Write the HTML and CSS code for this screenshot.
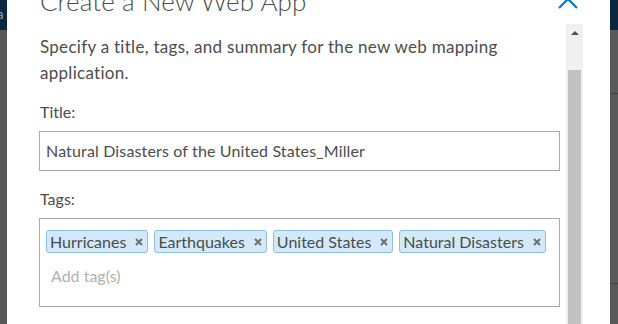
FILE: index.html
```html
<!DOCTYPE html>
<html lang="en">
<head>
    <meta charset="UTF-8">
    <title>Create a New Web App</title>
    <link rel="stylesheet" href="styles.css">
</head>
<body>
    <div class="page">
        <div class="side side-left"><div class="side-top"><span>a</span></div></div>

        <div class="dialog">
            <div class="dialog-header">
                <h1>Create a New Web App</h1>
                <svg class="close" width="22" height="22" viewBox="0 0 22 22">
                    <path d="M2 2 L20 20 M20 2 L2 20" stroke="#0079c1" stroke-width="2.2" fill="none"/>
                </svg>
            </div>

            <div class="dialog-body">
                <div class="form">
                    <p class="intro">Specify a title, tags, and summary for the new web mapping application.</p>

                    <label class="field-label">Title:</label>
                    <div class="text-input">Natural Disasters of the United States_Miller</div>

                    <label class="field-label">Tags:</label>
                    <div class="tag-box">
                        <div class="tag-row">
                            <span class="tag">Hurricanes<svg class="remove" viewBox="0 0 8 8"><path d="M1 1 L7 7 M7 1 L1 7"/></svg></span>
                            <span class="tag">Earthquakes<svg class="remove" viewBox="0 0 8 8"><path d="M1 1 L7 7 M7 1 L1 7"/></svg></span>
                            <span class="tag">United States<svg class="remove" viewBox="0 0 8 8"><path d="M1 1 L7 7 M7 1 L1 7"/></svg></span>
                            <span class="tag">Natural Disasters<svg class="remove" viewBox="0 0 8 8"><path d="M1 1 L7 7 M7 1 L1 7"/></svg></span>
                        </div>
                        <div class="placeholder">Add tag(s)</div>
                    </div>
                </div>

                <!-- scrollbar -->
                <div class="scrollbar">
                    <div class="arrow"></div>
                    <div class="thumb"></div>
                </div>
            </div>
        </div>

        <div class="side side-right">
            <div class="side-top"></div>
            <div class="side-line line-1"></div>
            <div class="side-line line-2"></div>
        </div>
    </div>
</body>
</html>
```

FILE: styles.css
```css
body {
    margin: 0;
    padding: 0;
    background-color: #595959;
    font-family: Lato, "Open Sans", sans-serif;
    color: #4c4c4c;
}
.page {
    display: flex;
    height: 324px;
    overflow: hidden;
}

/* dark strips left and right of the dialog */
.side {
    background-color: #595959;
    display: flex;
    flex-direction: column;
}
.side-left {
    width: 7px;
}
.side-right {
    width: 8px;
}
.side-top {
    height: 30px;
    background-color: #0b2840;
    overflow: hidden;
}
.side-left .side-top span {
    display: block;
    margin-left: -3px;
    margin-top: 6px;
    color: #9aa5b0;
    font-size: 13px;
}
.side-line {
    height: 1px;
    background-color: #3f3f3f;
}
.line-1 {
    margin-top: 63px;
}
.line-2 {
    margin-top: 189px;
}

.dialog {
    width: 603px;
    background-color: #fff;
    display: flex;
    flex-direction: column;
}
.dialog-header {
    display: flex;
    justify-content: space-between;
    align-items: flex-start;
    height: 24px;
    padding: 0 31px 0 33px;
}
.dialog-header h1 {
    margin: -15px 0 0 0;
    font-size: 26px;
    font-weight: 300;
    line-height: 32px;
    letter-spacing: 0.1px;
    color: #4c4c4c;
}
.close {
    margin-top: -12px;
}

.dialog-body {
    display: flex;
    flex: 1;
    min-height: 0;
}
.form {
    width: 521px;
    padding-left: 32px;
}
.intro {
    margin: 10px 0 0 1px;
    font-size: 17px;
    line-height: 26px;
    letter-spacing: 0.28px;
    width: 510px;
}
.field-label {
    display: block;
    margin: 16px 0 0 1px;
    font-size: 16px;
    line-height: 20px;
}
.text-input {
    margin-top: 9px;
    border: 1px solid #aaa;
    box-sizing: border-box;
    height: 40px;
    padding: 9px 6px;
    font-size: 16px;
    line-height: 20px;
    letter-spacing: 0.15px;
}
.text-input + .field-label {
    margin-top: 18px;
}
.tag-box {
    margin-top: 9px;
    height: 89px;
    border: 1px solid #aaa;
    box-sizing: border-box;
    padding: 11px 6px;
}
.tag-row {
    display: flex;
    gap: 6px;
}
.tag {
    display: inline-flex;
    align-items: center;
    height: 23px;
    box-sizing: border-box;
    padding: 0 4px 0 3px;
    background-color: #d2e9f9;
    border: 1px solid #8ebfe3;
    border-radius: 3px;
    font-size: 16px;
    white-space: nowrap;
}
.remove {
    width: 8px;
    height: 8px;
    margin-left: 9px;
    stroke: #707070;
    stroke-width: 2;
    fill: none;
}
.placeholder {
    margin: 13px 0 0 5px;
    font-size: 16px;
    line-height: 20px;
    color: #b0b0b0;
}

.scrollbar {
    width: 17px;
    margin-left: 6px;
    background-color: #f0f0f0;
    display: flex;
    flex-direction: column;
    align-items: center;
}
.arrow {
    margin-top: 7px;
    width: 0;
    height: 0;
    border-left: 4px solid transparent;
    border-right: 4px solid transparent;
    border-bottom: 4px solid #505050;
}
.thumb {
    margin-top: 35px;
    width: 13px;
    flex: 1;
    background-color: #c1c1c1;
}
```
